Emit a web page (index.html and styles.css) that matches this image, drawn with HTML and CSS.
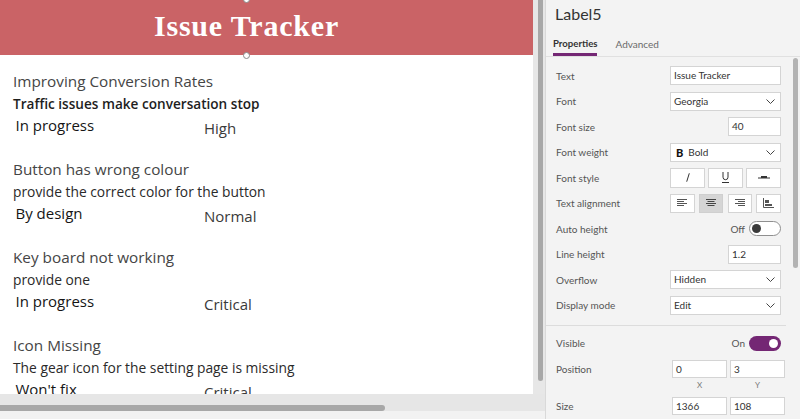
FILE: index.html
```html
<!DOCTYPE html>
<html lang="en">
<head>
<meta charset="utf-8">
<title>Issue Tracker</title>
<link rel="stylesheet" href="styles.css">
</head>
<body>
<div class="workspace">
  <div class="canvas-row">
    <div class="canvas">
      <header class="app-header">
        <h1 class="app-title">Issue Tracker</h1>
        <span class="handle handle-top"></span>
        <span class="handle handle-bottom"></span>
      </header>
      <div class="gallery">
        <div class="item">
          <div class="item-title">Improving Conversion Rates</div>
          <div class="item-desc strong">Traffic issues make conversation stop</div>
          <div class="item-meta"><span class="status">In progress</span><span class="priority">High</span></div>
        </div>
        <div class="item">
          <div class="item-title">Button has wrong colour</div>
          <div class="item-desc">provide the correct color for the button</div>
          <div class="item-meta"><span class="status">By design</span><span class="priority">Normal</span></div>
        </div>
        <div class="item">
          <div class="item-title">Key board not working</div>
          <div class="item-desc">provide one</div>
          <div class="item-meta"><span class="status">In progress</span><span class="priority">Critical</span></div>
        </div>
        <div class="item">
          <div class="item-title">Icon Missing</div>
          <div class="item-desc">The gear icon for the setting page is missing</div>
          <div class="item-meta"><span class="status">Won't fix</span><span class="priority">Critical</span></div>
        </div>
      </div>
    </div>
    <div class="vscroll"><div class="vthumb"></div></div>
  </div>
  <div class="hscroll"><div class="hthumb"></div></div>
</div>

<aside class="panel">
  <div class="panel-title">Label5</div>
  <div class="tabs">
    <span class="tab active">Properties</span>
    <span class="tab">Advanced</span>
  </div>
  <div class="props">
    <div class="row"><span class="label">Text</span><div class="ctrl"><div class="input">Issue Tracker</div></div></div>
    <div class="row"><span class="label">Font</span><div class="ctrl"><div class="input select">Georgia<svg class="chev" width="9" height="5" viewBox="0 0 9 5"><path d="M0.5 0.5L4.5 4.5L8.5 0.5" fill="none" stroke="#444"/></svg></div></div></div>
    <div class="row"><span class="label">Font size</span><div class="ctrl end"><div class="input small">40</div></div></div>
    <div class="row"><span class="label">Font weight</span><div class="ctrl"><div class="input select"><span class="bold-b">B</span>Bold<svg class="chev" width="9" height="5" viewBox="0 0 9 5"><path d="M0.5 0.5L4.5 4.5L8.5 0.5" fill="none" stroke="#444"/></svg></div></div></div>
    <div class="row"><span class="label">Font style</span><div class="ctrl btns3">
      <div class="btn"><svg width="6" height="9" viewBox="0 0 6 9"><path d="M4.3 0.3L1.7 8.7" stroke="#333" stroke-width="1"/></svg></div>
      <div class="btn"><svg width="9" height="11" viewBox="0 0 9 11"><path d="M2 0V5.2a2.5 2.5 0 0 0 5 0V0" fill="none" stroke="#333"/><path d="M1 10.5H8" stroke="#333"/></svg></div>
      <div class="btn"><svg width="12" height="5" viewBox="0 0 12 5"><path d="M0 3H12" stroke="#333"/><rect x="3" y="1" width="6" height="2" fill="#333"/></svg></div>
    </div></div>
    <div class="row"><span class="label">Text alignment</span><div class="ctrl btns4">
      <div class="btn"><svg width="10" height="8" viewBox="0 0 10 8"><path d="M0 0.5H10M0 2.5H7M0 4.5H10M0 6.5H7" stroke="#555"/></svg></div>
      <div class="btn on"><svg width="10" height="8" viewBox="0 0 10 8"><path d="M0 0.5H10M1.5 2.5H8.5M0 4.5H10M1.5 6.5H8.5" stroke="#444"/></svg></div>
      <div class="btn"><svg width="10" height="8" viewBox="0 0 10 8"><path d="M0 0.5H10M3 2.5H10M0 4.5H10M3 6.5H10" stroke="#555"/></svg></div>
      <div class="btn"><svg width="11" height="10" viewBox="0 0 11 10"><path d="M0.5 0V9.5H11" fill="none" stroke="#555"/><rect x="2" y="2" width="4" height="3" fill="#555"/><rect x="2" y="6" width="7" height="2" fill="#555"/></svg></div>
    </div></div>
    <div class="row"><span class="label">Auto height</span><div class="ctrl end"><span class="tog-text">Off</span><span class="toggle off"><span class="knob"></span></span></div></div>
    <div class="row"><span class="label">Line height</span><div class="ctrl end"><div class="input small">1.2</div></div></div>
    <div class="row"><span class="label">Overflow</span><div class="ctrl"><div class="input select">Hidden<svg class="chev" width="9" height="5" viewBox="0 0 9 5"><path d="M0.5 0.5L4.5 4.5L8.5 0.5" fill="none" stroke="#444"/></svg></div></div></div>
    <div class="row"><span class="label">Display mode</span><div class="ctrl"><div class="input select">Edit<svg class="chev" width="9" height="5" viewBox="0 0 9 5"><path d="M0.5 0.5L4.5 4.5L8.5 0.5" fill="none" stroke="#444"/></svg></div></div></div>
  </div>
  <div class="divider"></div>
  <div class="props2">
    <div class="row vis"><span class="label">Visible</span><div class="ctrl end"><span class="tog-text">On</span><span class="toggle on"><span class="knob"></span></span></div></div>
    <div class="pair-row"><span class="label">Position</span><div class="pair"><div class="input">0</div><div class="input">3</div></div></div>
    <div class="pair-caps"><span>X</span><span>Y</span></div>
    <div class="pair-row size"><span class="label">Size</span><div class="pair"><div class="input">1366</div><div class="input">108</div></div></div>
    <div class="pair-caps"><span>Width</span><span>Height</span></div>
  </div>
  <div class="pscroll"></div>
</aside>
</body>
</html>
```

FILE: styles.css
```css
html, body {
  margin: 0;
  padding: 0;
}
body {
  width: 800px;
  height: 419px;
  overflow: hidden;
  display: flex;
  background: #f3f3f3;
  font-family: "Open Sans", "Noto Sans", sans-serif;
}

/* ---------- left workspace ---------- */
.workspace {
  width: 545px;
  height: 419px;
  display: flex;
  flex-direction: column;
  flex: none;
}
.canvas-row {
  height: 394px;
  display: flex;
  flex: none;
}
.canvas {
  width: 533px;
  height: 394px;
  background: #ffffff;
  overflow: hidden;
  flex: none;
}
.vscroll {
  width: 12px;
  background: #e7e7e7;
  flex: none;
}
.vthumb {
  width: 5px;
  height: 381px;
  margin-left: 5px;
  background: #a8a8a8;
  border-radius: 0 0 3px 3px;
}
.hscroll {
  height: 25px;
  flex: none;
  background: linear-gradient(#e6e6e6 0, #e6e6e6 17px, #f2f2f2 17px);
  padding-top: 11px;
  box-sizing: border-box;
}
.hthumb {
  width: 385px;
  height: 6px;
  background: #a8a8a8;
  border-radius: 0 3px 3px 0;
}

.app-header {
  position: relative;
  height: 55px;
  background: #ca6366;
  padding-right: 40px;
  box-sizing: border-box;
}
.app-title {
  margin: 0;
  font-family: "Liberation Serif", "Times New Roman", serif;
  font-weight: bold;
  font-size: 30px;
  letter-spacing: 0.8px;
  line-height: 52px;
  color: #ffffff;
  text-align: center;
}
.handle {
  position: absolute;
  left: 243px;
  width: 5px;
  height: 5px;
  border: 1px solid #8a8a8a;
  border-radius: 50%;
  background: #ffffff;
}
.handle-top { top: -4px; }
.handle-bottom { bottom: -4px; }

.gallery {
  padding: 15px 0 0 13px;
}
.item {
  margin-bottom: 23px;
}
.item-title {
  font-size: 15.3px;
  line-height: 22px;
  color: #454545;
}
.item-desc {
  font-size: 13.8px;
  line-height: 23px;
  color: #2a2a2a;
}
.item-desc.strong {
  font-weight: 600;
  font-size: 13.6px;
  color: #1e1e1e;
}
.item-meta {
  display: flex;
  align-items: flex-start;
  height: 20px;
  font-size: 15px;
  line-height: 20px;
}
.status {
  width: 188.5px;
  padding-left: 2.5px;
  color: #151515;
}
.priority {
  padding-top: 2.5px;
  color: #3a3a3a;
}

/* ---------- right panel ---------- */
.panel {
  position: relative;
  width: 255px;
  height: 419px;
  box-sizing: border-box;
  border-left: 1px solid #d9d9d9;
  background: #f3f3f3;
  font-family: "Lato", "Noto Sans", sans-serif;
  color: #505050;
  flex: none;
  overflow: hidden;
}
.panel-title {
  padding: 4px 0 0 9px;
  font-size: 16px;
  line-height: 20px;
  color: #333333;
}
.tabs {
  display: flex;
  gap: 18px;
  padding: 13px 0 0 7px;
  border-bottom: 1px solid #e0e0e0;
}
.tab {
  font-size: 10px;
  line-height: 14px;
  padding-bottom: 2px;
  border-bottom: 3px solid transparent;
  color: #6a6a6a;
}
.tab.active {
  font-weight: bold;
  font-size: 9.6px;
  color: #333333;
  border-bottom-color: #742774;
}

.props {
  padding-top: 6px;
}
.row {
  height: 25.5px;
  display: flex;
  align-items: center;
}
.label {
  flex: 1;
  padding-left: 10px;
  font-size: 10px;
  color: #555555;
}
.ctrl {
  width: 111px;
  margin-right: 19px;
  display: flex;
  align-items: center;
}
.ctrl.end {
  justify-content: flex-end;
}
.input {
  flex: 1;
  height: 19px;
  box-sizing: border-box;
  background: #ffffff;
  border: 1px solid #d4d4d4;
  padding-left: 3px;
  font-size: 10px;
  line-height: 17px;
  color: #333333;
  display: flex;
  align-items: center;
}
.input.small {
  flex: none;
  width: 53px;
}
.select {
  justify-content: flex-start;
}
.chev {
  margin-left: auto;
  margin-right: 5px;
}
.bold-b {
  font-weight: 900;
  font-size: 11px;
  color: #111;
  margin: 0 5px 0 2px;
}
.btns3 {
  gap: 3px;
}
.btns4 {
  gap: 4.3px;
}
.btn {
  flex: 1;
  height: 20px;
  box-sizing: border-box;
  background: #ffffff;
  border: 1px solid #d4d4d4;
  display: flex;
  align-items: center;
  justify-content: center;
}
.btns4 .btn {
  height: 19px;
}
.btn.on {
  background: #d5d5d5;
  border-color: #cfcfcf;
}
.tog-text {
  font-size: 10px;
  color: #555555;
  margin-right: 4px;
}
.toggle {
  position: relative;
  width: 32px;
  height: 15px;
  box-sizing: border-box;
  border-radius: 8px;
}
.toggle.off {
  background: #ffffff;
  border: 1px solid #8f8f8f;
}
.toggle.on {
  background: #742774;
}
.knob {
  position: absolute;
  top: 50%;
  width: 9px;
  height: 9px;
  margin-top: -4.5px;
  border-radius: 50%;
}
.toggle.off .knob {
  left: 2px;
  background: #3a3a3a;
}
.toggle.on .knob {
  right: 3px;
  background: #ffffff;
}

.divider {
  margin: 6.5px 14px 0 0;
  height: 1px;
  background: #dcdcdc;
}
.props2 {
  padding-top: 5px;
}
.row.vis {
  height: 25px;
}
.pair-row {
  display: flex;
  align-items: center;
  margin-top: 4px;
}
.pair-row.size {
  margin-top: 5px;
}
.pair {
  width: 113px;
  margin-right: 15px;
  display: flex;
  gap: 3px;
}
.pair .input {
  height: 18px;
  line-height: 16px;
}
.pair-caps {
  display: flex;
  gap: 3px;
  margin-left: 126px;
  width: 113px;
  height: 14px;
  font-size: 8px;
  line-height: 14px;
  color: #777777;
}
.pair-caps span {
  flex: 1;
  text-align: center;
}
.pscroll {
  position: absolute;
  top: 58px;
  left: 247px;
  width: 5px;
  height: 210px;
  border-radius: 3px;
  background: #b3b3b3;
}
```
